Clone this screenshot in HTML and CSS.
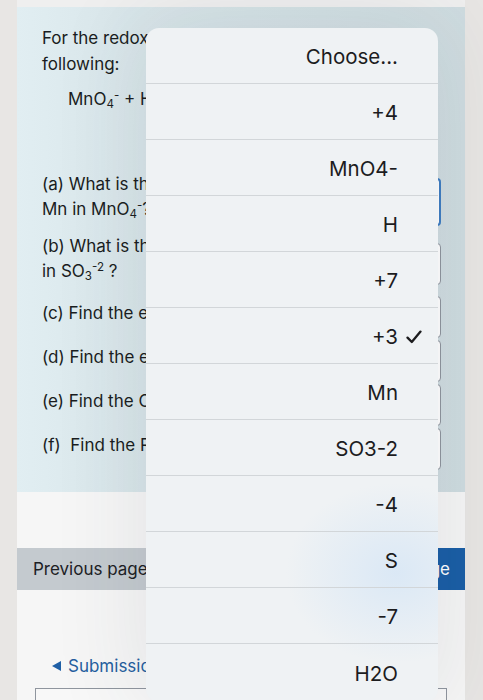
FILE: index.html
```html
<!DOCTYPE html>
<html lang="en">
<head>
<meta charset="utf-8">
<title>Quiz</title>
<link rel="stylesheet" href="styles.css">
</head>
<body>
<div class="page">
  <div class="topband"></div>
  <div class="panel">
    <p class="intro"><span class="line">For the redox reaction shown below, answer the</span><span class="line">following:</span></p>
    <p class="equation">MnO<sub>4</sub><sup>-</sup> + H<sub>2</sub>SO<sub>3</sub> → Mn<sup>+3</sup> + SO<sub>4</sub><sup>-2</sup> + H<sub>2</sub>O</p>

    <div class="qrow qrow-a">
      <div class="qtext"><span class="line">(a) What is the oxidation number of</span><span class="line">Mn in MnO<sub>4</sub><sup>-</sup>?</span></div>
      <div class="select select-focus"></div>
    </div>
    <div class="qrow qrow-b">
      <div class="qtext"><span class="line">(b) What is the oxidation number of S</span><span class="line">in SO<sub>3</sub><sup>-2</sup> ?</span></div>
      <div class="select"></div>
    </div>
    <div class="qrow qrow-single qrow-c">
      <div class="qtext"><span class="line">(c) Find the element oxidized.</span></div>
      <div class="select"></div>
    </div>
    <div class="qrow qrow-single">
      <div class="qtext"><span class="line">(d) Find the element reduced.</span></div>
      <div class="select"></div>
    </div>
    <div class="qrow qrow-single">
      <div class="qtext"><span class="line">(e) Find the Oxidizing agent.</span></div>
      <div class="select"></div>
    </div>
    <div class="qrow qrow-single">
      <div class="qtext"><span class="line">(f)&nbsp; Find the Reducing agent.</span></div>
      <div class="select"></div>
    </div>
  </div>

  <div class="navrow">
    <button class="btn btn-prev">Previous page</button>
    <button class="btn btn-next">Next page</button>
  </div>

  <div class="activity-link"><span class="tri"></span><span>Submission of Lab Report</span></div>
  <div class="jumpbox"></div>
</div>

<div class="popover">
  <div class="opt">Choose...</div>
  <div class="opt">+4</div>
  <div class="opt">MnO4-</div>
  <div class="opt">H</div>
  <div class="opt">+7</div>
  <div class="opt">+3<svg class="check" width="16" height="14" viewBox="0 0 16 14"><path d="M1.5 7.6 L5.8 12 L14.5 1.6" fill="none" stroke="#1c1c1e" stroke-width="2.3" stroke-linecap="round" stroke-linejoin="round"/></svg></div>
  <div class="opt">Mn</div>
  <div class="opt">SO3-2</div>
  <div class="opt">-4</div>
  <div class="opt">S</div>
  <div class="opt">-7</div>
  <div class="opt">H2O</div>
</div>
</body>
</html>
```

FILE: styles.css
```css
html, body {
  margin: 0;
  padding: 0;
}
body {
  background: #e8e6e4;
  font-family: Inter, "Noto Sans", sans-serif;
  color: #1a1d21;
  width: 483px;
  height: 700px;
  overflow: hidden;
  position: relative;
}
.page {
  margin-left: 17px;
  width: 448px;
  height: 700px;
  background: #f6f6f6;
}
.topband {
  height: 7px;
  background: #efefef;
}
.panel {
  background: linear-gradient(90deg, #e1eef2 0%, #d8e5e9 28%, #cfdce0 100%);
  padding: 18px 24px 22px 25px;
  font-size: 17px;
}
.line {
  display: block;
  white-space: nowrap;
}
sub, sup {
  font-size: 0.68em;
  line-height: 0;
}
sub { vertical-align: -0.3em; }
sup { vertical-align: 0.55em; }
.intro {
  margin: 0;
  line-height: 26px;
}
.equation {
  margin: 9px 0 0 0;
  padding-left: 26px;
  line-height: 26px;
  white-space: nowrap;
}
.qrow {
  display: flex;
  align-items: flex-start;
}
.qtext {
  flex: 1 1 0;
  min-width: 0;
  line-height: 25px;
}
.select {
  flex: none;
  width: 120px;
  height: 40px;
  border: 1px solid #8f959e;
  border-radius: 4px;
  background: #ffffff;
}
.select-focus {
  height: 44px;
  border: 2px solid #3f7ec2;
}
.qrow-a {
  margin-top: 60px;
}
.qrow-a .select {
  margin-top: 6px;
}
.qrow-b {
  margin-top: 8px;
}
.qrow-b .select {
  margin-top: 9px;
}
.qrow-single {
  align-items: center;
  margin-top: 2px;
}
.qrow-single .qtext {
  padding-bottom: 8px;
}
.qrow-c {
  margin-top: 11px;
}
.navrow {
  margin-top: 56px;
  display: flex;
  justify-content: space-between;
}
.btn {
  height: 42px;
  border: 0;
  border-radius: 0;
  font-family: inherit;
  font-size: 17px;
  padding: 0 16px;
  margin: 0;
}
.btn-prev {
  background: #c4cacf;
  color: #1d2125;
}
.btn-next {
  background: #1a5ea6;
  color: #ffffff;
  padding: 0 15px;
}
.activity-link {
  margin-top: 63px;
  padding-left: 35px;
  display: flex;
  align-items: center;
  gap: 7px;
  line-height: 26px;
  font-size: 17px;
  color: #255f9f;
  white-space: nowrap;
}
.tri {
  width: 0;
  height: 0;
  border-top: 5px solid transparent;
  border-bottom: 5px solid transparent;
  border-right: 9px solid #1f5fa6;
}
.jumpbox {
  margin: 9px 0 0 18px;
  width: 410px;
  height: 40px;
  border: 1px solid #8f959e;
  background: #f8f8f8;
}
.popover {
  position: absolute;
  left: 146px;
  top: 28px;
  width: 292px;
  height: 674px;
  border-radius: 13px;
  overflow: hidden;
  background:
    radial-gradient(ellipse 110px 90px at 250px 545px, rgba(210, 228, 246, 0.7), rgba(210, 228, 246, 0) 100%),
    #eff2f4;
  box-shadow: 0 0 90px 10px rgba(40, 60, 70, 0.09);
}
.opt {
  box-sizing: border-box;
  height: 56px;
  border-bottom: 1px solid #d2d6d9;
  display: flex;
  align-items: center;
  justify-content: flex-end;
  padding: 2px 40px 0 0;
  font-size: 20.5px;
  color: #1c1c1e;
}
.opt:last-child {
  border-bottom: 0;
}
.check {
  margin-left: 8px;
  margin-right: -24px;
}
```
